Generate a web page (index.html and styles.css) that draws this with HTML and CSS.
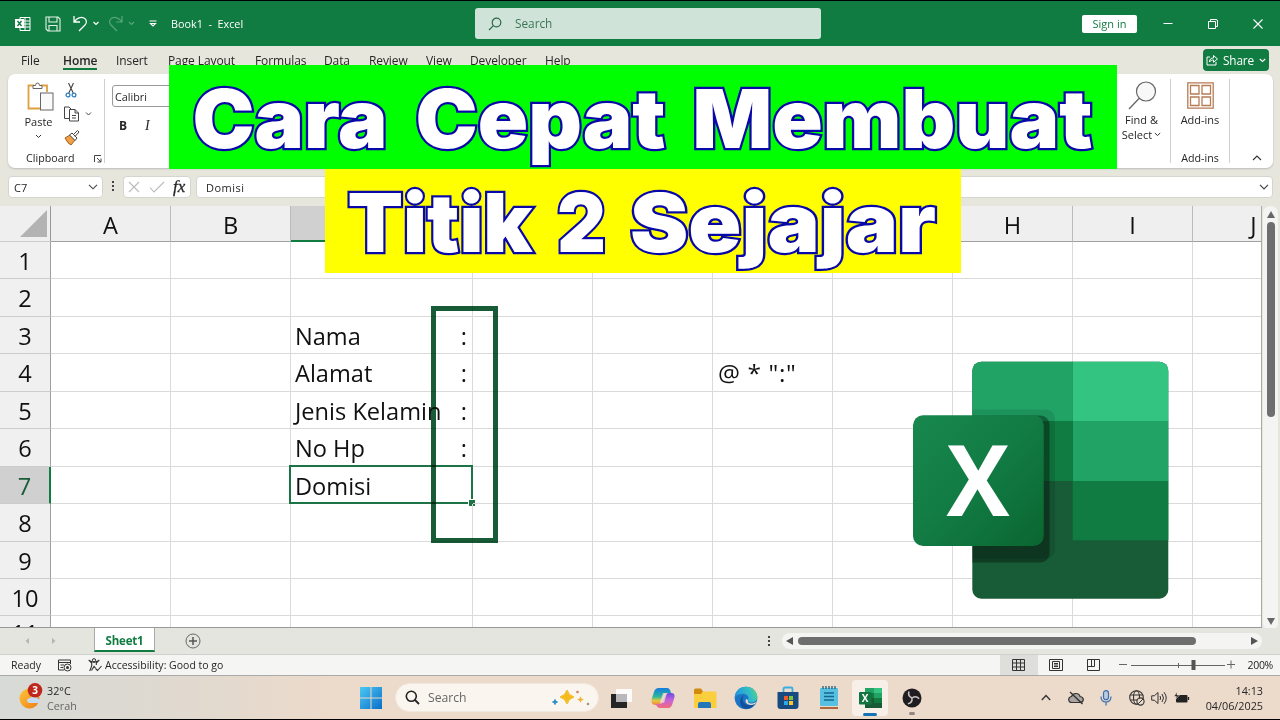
FILE: index.html
```html
<!DOCTYPE html>
<html lang="id">
<head>
    <meta charset="UTF-8">
    <title>Book1 - Excel</title>
    <link rel="stylesheet" href="styles.css">
</head>
<body>
<div class="screen">
    <!-- title bar -->
    <header class="titlebar">
        <div class="quick">
            <svg class="q-xl" width="16" height="16" viewBox="0 0 16 16"><path d="M5 1.500h10v13H5zM10 1.500v13M5 5h10M5 8h10M5 11h10" fill="none" stroke="#fff"/><rect y="3" width="9" height="9" fill="#fff"/><path d="M2.500 5l4 5M6.500 5l-4 5" stroke="#107c41" stroke-width="1.400"/></svg>
            <svg class="q-save" width="16" height="16" viewBox="0 0 16 16"><path d="M1 1h12l2 2v12H3l-2-2zM4 1v5h8V1M4 15V9.500h8V15" fill="none" stroke="#e5f2ea" stroke-width="1.100"/></svg>
            <svg class="q-undo" width="28" height="16" viewBox="0 0 28 16"><path d="M1 0v6h6M1.500 5.500C4 2 8 .5 11 2c3 1.600 3 5 1 7l-6 6" fill="none" stroke="#fff" stroke-width="1.300"/><path d="M20.500 6l2.500 2.500L25.500 6" fill="none" stroke="#fff" stroke-width="1.200"/></svg>
            <svg class="q-redo" width="28" height="16" viewBox="0 0 28 16"><g fill="none" stroke="#57a57a" stroke-width="1.200"><path d="M13 0v6H7M12.500 5.500C10 2 6 .5 3 2 0 3.600 0 7 2 9l6 6"/><path d="M20 6l2.500 2.500L25 6"/></g></svg>
            <svg class="q-more" width="8" height="8" viewBox="0 0 8 8"><path d="M.5 1h7M1.500 3.500L4 6l2.500-2.500z" fill="none" stroke="#fff" stroke-width="1.100"/></svg>
            <span>Book1&nbsp; -&nbsp; Excel</span>
        </div>
        <div class="find">
            <svg width="14" height="14" viewBox="0 0 14 14"><circle cx="8.500" cy="5.500" r="4.300" fill="none" stroke="#2a6a46" stroke-width="1.200"/><path d="M5.400 8.600L1 13" stroke="#2a6a46" stroke-width="1.200"/></svg>
            <span>Search</span>
        </div>
        <div class="win">
            <span class="signin">Sign in</span>
            <svg width="12" height="12" viewBox="0 0 12 12"><path d="M1.500 5.500h9" stroke="#fff"/></svg>
            <svg width="12" height="12" viewBox="0 0 12 12"><path d="M1.500 3.500h7v7h-7zM3.500 3.200V1.500h5.500q1.500 0 1.500 1.500v5.500H9" fill="none" stroke="#fff"/></svg>
            <svg width="12" height="12" viewBox="0 0 12 12"><path d="M1.500 1.500l9 9M10.500 1.500l-9 9" stroke="#fff" stroke-width="1.100"/></svg>
        </div>
    </header>

    <!-- ribbon tabs -->
    <nav class="tabs">
        <span class="t-file">File</span>
        <span class="t-home"><b>Home</b></span>
        <span class="t-insert">Insert</span>
        <span class="t-page">Page Layout</span>
        <span class="t-formulas">Formulas</span>
        <span class="t-data">Data</span>
        <span class="t-review">Review</span>
        <span class="t-view">View</span>
        <span class="t-dev">Developer</span>
        <span>Help</span>
        <div class="share">
            <svg width="12" height="12" viewBox="0 0 12 12"><path d="M4 3H1v8h9V8M3.500 8C3.500 5 5 4 7.500 4V1.500l4 3.500-4 3.300V6C6 6 4.500 6.500 3.500 8z" fill="none" stroke="#fff"/></svg>
            <span>Share</span>
            <svg width="7" height="5" viewBox="0 0 7 5"><path d="M.8 1l2.700 2.500L6.200 1" fill="none" stroke="#fff" stroke-width="1.200"/></svg>
        </div>
    </nav>

    <!-- ribbon -->
    <section class="ribbon">
        <div class="group clipboard">
            <div class="clip-tools">
                <div class="paste">
                    <svg width="27" height="29" viewBox="0 0 27 29"><path d="M7 3.500H1.500v23H14M14 3.500h6V10" fill="none" stroke="#e0a040" stroke-width="1.800"/><path d="M6 6.500V3.500h2.500q0-2.500 2-2.500t2 2.500H15v3z" fill="#fff" stroke="#666"/><rect x="13.500" y="11" width="12.500" height="17" fill="#fafafa" stroke="#666"/></svg>
                    <span>Paste</span>
                    <svg class="paste-arrow" width="7" height="5" viewBox="0 0 7 5"><path d="M1 1l2.500 2.500L6 1" fill="none" stroke="#333"/></svg>
                </div>
                <div class="clip-side">
                    <svg width="28" height="15" viewBox="0 0 28 15"><path d="M4.500 0l4.700 10M9.500 0L4.800 10" stroke="#444" stroke-width="1.100"/><g fill="none" stroke="#2f7fc0" stroke-width="1.300"><circle cx="4" cy="12" r="1.900"/><circle cx="10" cy="12" r="1.900"/></g></svg>
                    <svg width="28" height="16" viewBox="0 0 28 16"><path d="M5 12.500H.5V1H5l2 2M5.500 3.500H11l3.500 3.500v8h-9zM11 3.500V7h3.500M8 9.500h4M8 12h4" fill="none" stroke="#444"/><path d="M22 6.500L24.500 9 27 6.500" fill="none" stroke="#444"/></svg>
                    <svg width="28" height="15" viewBox="0 0 28 15"><path d="M1 8l5-3 5 5-4 5q-3-1-6-7z" fill="#f0a048" stroke="#a85a18"/><path d="M5.500 5L8 3l5 5-2 2.500zM9 5l4.500-4.500L15 2l-4 4.500" fill="#fff" stroke="#444"/></svg>
                </div>
            </div>
            <div class="label">Clipboard <svg width="8" height="8" viewBox="0 0 8 8"><path d="M.5 7V.5H7M3 3l4 4M7 3.500V7H3.500" fill="none" stroke="#444"/></svg></div>
        </div>
        <div class="group font">
            <div class="fontbox">Calibri</div>
            <div class="bi"><b>B</b><i>I</i></div>
        </div>
        <div class="group select">
            <svg width="29" height="29" viewBox="0 0 29 29"><circle cx="18" cy="10.500" r="9.500" fill="#f8f8f8" stroke="#666" stroke-width="1.200"/><path d="M11 17.500L1 28" stroke="#666" stroke-width="1.300"/></svg>
            <span>Find &amp;</span>
            <span>Select<svg width="7" height="5" viewBox="0 0 7 5"><path d="M.8 1l2.700 2.500L6.200 1" fill="none" stroke="#333"/></svg></span>
        </div>
        <div class="group addins">
            <svg width="27" height="27" viewBox="0 0 27 27"><path d="M.8.8h25.400v25.400H.8zM3.500 3.500h8.500v8.500H3.500zM15 3.500h8.500v8.500H15zM3.500 15h8.500v8.500H3.500zM15 15h8.500v8.500H15z" fill="none" stroke="#b77b55" stroke-width="1.300"/></svg>
            <span>Add-ins</span>
            <div class="label">Add-ins</div>
        </div>
        <svg class="collapse" width="10" height="6" viewBox="0 0 10 6"><path d="M1 5l4-4 4 4" fill="none" stroke="#333" stroke-width="1.100"/></svg>
    </section>

    <!-- formula bar -->
    <section class="formula">
        <div class="namebox"><span>C7</span><svg width="10" height="6" viewBox="0 0 10 6"><path d="M1 .8l4 4 4-4" fill="none" stroke="#444" stroke-width="1.100"/></svg></div>
        <div class="dots"><i></i><i></i><i></i></div>
        <div class="fx">
            <svg width="38" height="12" viewBox="0 0 38 12"><path d="M1 1l10 10M11 1L1 11M22 6.500l4 4.500L36 1" fill="none" stroke="#bbb" stroke-width="1.100"/></svg>
            <em>fx</em>
        </div>
        <div class="value"><span>Domisi</span><svg width="10" height="6" viewBox="0 0 10 6"><path d="M1 .8l4 4 4-4" fill="none" stroke="#444" stroke-width="1.200"/></svg></div>
    </section>

    <!-- worksheet -->
    <main class="work">
        <div class="sheet">
            <div class="row head">
                <div class="num"><svg width="28" height="29" viewBox="0 0 28 29"><path d="M27 1v27H0z" fill="#b3b3b3"/></svg></div>
                <div class="cell">A</div><div class="cell">B</div><div class="cell c sel"></div><div class="cell"></div><div class="cell"></div><div class="cell"></div><div class="cell"></div><div class="cell">H</div><div class="cell">I</div><div class="cell j">J</div>
            </div>
            <div class="row"><div class="num">1</div><div class="cell"></div><div class="cell"></div><div class="cell c"></div><div class="cell"></div><div class="cell"></div><div class="cell"></div><div class="cell"></div><div class="cell"></div><div class="cell"></div><div class="cell j"></div></div>
            <div class="row"><div class="num">2</div><div class="cell"></div><div class="cell"></div><div class="cell c"></div><div class="cell"></div><div class="cell"></div><div class="cell"></div><div class="cell"></div><div class="cell"></div><div class="cell"></div><div class="cell j"></div></div>
            <div class="row"><div class="num">3</div><div class="cell"></div><div class="cell"></div><div class="cell c"><span>Nama</span><span>:</span></div><div class="cell"></div><div class="cell"></div><div class="cell"></div><div class="cell"></div><div class="cell"></div><div class="cell"></div><div class="cell j"></div></div>
            <div class="row"><div class="num">4</div><div class="cell"></div><div class="cell"></div><div class="cell c"><span>Alamat</span><span>:</span></div><div class="cell"></div><div class="cell"></div><div class="cell code"><span>@ * ":"</span></div><div class="cell"></div><div class="cell"></div><div class="cell"></div><div class="cell j"></div></div>
            <div class="row"><div class="num">5</div><div class="cell"></div><div class="cell"></div><div class="cell c"><span>Jenis Kelamin</span><span>:</span></div><div class="cell"></div><div class="cell"></div><div class="cell"></div><div class="cell"></div><div class="cell"></div><div class="cell"></div><div class="cell j"></div></div>
            <div class="row"><div class="num">6</div><div class="cell"></div><div class="cell"></div><div class="cell c"><span>No Hp</span><span>:</span></div><div class="cell"></div><div class="cell"></div><div class="cell"></div><div class="cell"></div><div class="cell"></div><div class="cell"></div><div class="cell j"></div></div>
            <div class="row"><div class="num sel">7</div><div class="cell"></div><div class="cell"></div><div class="cell c active"><span>Domisi</span></div><div class="cell"></div><div class="cell"></div><div class="cell"></div><div class="cell"></div><div class="cell"></div><div class="cell"></div><div class="cell j"></div></div>
            <div class="row"><div class="num">8</div><div class="cell"></div><div class="cell"></div><div class="cell c"></div><div class="cell"></div><div class="cell"></div><div class="cell"></div><div class="cell"></div><div class="cell"></div><div class="cell"></div><div class="cell j"></div></div>
            <div class="row"><div class="num">9</div><div class="cell"></div><div class="cell"></div><div class="cell c"></div><div class="cell"></div><div class="cell"></div><div class="cell"></div><div class="cell"></div><div class="cell"></div><div class="cell"></div><div class="cell j"></div></div>
            <div class="row"><div class="num">10</div><div class="cell"></div><div class="cell"></div><div class="cell c"></div><div class="cell"></div><div class="cell"></div><div class="cell"></div><div class="cell"></div><div class="cell"></div><div class="cell"></div><div class="cell j"></div></div>
            <div class="row last"><div class="num">11</div><div class="cell"></div><div class="cell"></div><div class="cell c"></div><div class="cell"></div><div class="cell"></div><div class="cell"></div><div class="cell"></div><div class="cell"></div><div class="cell"></div><div class="cell j"></div></div>
        </div>
        <div class="vscroll">
            <svg width="8" height="7" viewBox="0 0 8 7"><path d="M4 0l4 7H0z" fill="#666"/></svg>
            <div class="thumb"></div>
            <svg width="8" height="7" viewBox="0 0 8 7"><path d="M4 7L0 0h8z" fill="#666"/></svg>
        </div>
    </main>

    <!-- sheet tabs -->
    <section class="sheetbar">
        <svg class="arrows" width="32" height="8" viewBox="0 0 32 8"><path d="M4 1v6L.5 4zM27 1v6l3.500-3z" fill="#b5b5b5"/></svg>
        <div class="sheettab">Sheet1</div>
        <svg class="plus" width="16" height="16" viewBox="0 0 16 16"><circle cx="8" cy="8" r="7" fill="none" stroke="#666"/><path d="M8 4v8M4 8h8" stroke="#555" stroke-width="1.500"/></svg>
        <div class="dots"><i></i><i></i><i></i></div>
        <div class="hscroll">
            <svg width="7" height="8" viewBox="0 0 7 8"><path d="M0 4l7-4v8z" fill="#555"/></svg>
            <div class="thumb"></div>
            <svg width="7" height="8" viewBox="0 0 7 8"><path d="M7 4L0 0v8z" fill="#555"/></svg>
        </div>
    </section>

    <!-- status bar -->
    <section class="status">
        <span class="ready">Ready</span>
        <svg class="macro" width="14" height="13" viewBox="0 0 14 13"><path d="M6 11H.5V1h12v4M.5 3.500h12M2.500 6H6M2.500 8.500H5" fill="none" stroke="#333"/><circle cx="9.500" cy="8.500" r="3.500" fill="#f5f5f5" stroke="#333"/><circle cx="9.500" cy="8.500" r="1.500" fill="#333"/></svg>
        <svg class="acc" width="14" height="14" viewBox="0 0 14 14"><circle cx="6" cy="2.200" r="1.600" fill="none" stroke="#333"/><path d="M.7 2l3 3v3l-2 5M11.300 2L8.300 5v2M1 2.500L6 4.500l5-2M3.500 12.500L6 8.500l1.500 1.500M7.500 10.500l2 2L13.500 8" fill="none" stroke="#333" stroke-width="1.100"/></svg>
        <span>Accessibility: Good to go</span>
        <div class="views">
            <div class="view on"><svg width="13" height="12" viewBox="0 0 13 12"><path d="M.5.500h12v11H.500zM4.500.500v11M8.500.500v11M.500 4h12M.500 8h12" fill="none" stroke="#333"/></svg></div>
            <div class="view"><svg width="14" height="12" viewBox="0 0 14 12"><path d="M.500.500h13v11H.500zM3.500 2.500h7v7h-7zM5 4.500h4M5 6h4M5 7.500h4" fill="none" stroke="#333"/></svg></div>
            <div class="view"><svg width="13" height="12" viewBox="0 0 13 12"><path d="M.500.500h12v11H.500zM.500 7.500h7V.500M4.500.500v7" fill="none" stroke="#333"/></svg></div>
            <svg class="zoom" width="116" height="12" viewBox="0 0 116 12"><path d="M0 5.500h8M12 6.500h94M59.500 4v5M108 5.500h8M112 1.500v8" stroke="#666"/><rect x="72.500" y="1" width="4" height="10" fill="#555"/></svg>
            <span class="pct">200%</span>
        </div>
    </section>

    <!-- taskbar -->
    <footer class="taskbar">
        <div class="weather">
            <svg width="26" height="28" viewBox="0 0 26 28"><defs><linearGradient id="sun" x1="0" y1="0" x2="1" y2="1"><stop offset="0" stop-color="#ffc83a"/><stop offset="1" stop-color="#ee7c16"/></linearGradient></defs><circle cx="10.500" cy="15.500" r="10" fill="url(#sun)"/><path d="M11 20q-3-.3-3-2.500 0-2.500 3.500-2.500 1-2.500 4-2 2.500 0 3 2.500 3 .5 2.500 3-.5 1.500-3 1.500z" fill="#c5dbf5"/><circle cx="16" cy="7.300" r="7.300" fill="#c0271c"/><text x="16" y="11" text-anchor="middle" class="badge">3</text></svg>
            <div><span>32°C</span><span class="sky">Cerah</span></div>
        </div>
        <svg class="start" width="22" height="22" viewBox="0 0 22 22"><defs><linearGradient id="win" x1="0" y1="0" x2="1" y2="1"><stop offset="0" stop-color="#4cc8f4"/><stop offset="1" stop-color="#0a6fc8"/></linearGradient></defs><path d="M0 0h10.500v10.500H0zM11.500 0H22v10.500H11.500zM0 11.500h10.500V22H0zM11.500 11.500H22V22H11.500z" fill="url(#win)"/></svg>
        <div class="tasksearch">
            <svg width="15" height="15" viewBox="0 0 15 15"><circle cx="6.300" cy="6.300" r="5" fill="none" stroke="#222" stroke-width="1.600"/><path d="M10 10l4 4" stroke="#222" stroke-width="1.800"/></svg>
            <span>Search</span>
            <svg class="spark" width="38" height="18" viewBox="0 0 38 18"><path d="M15 1q1.500 5.500 7 7-5.500 1.500-7 7-1.500-5.500-7-7 5.500-1.500 7-7z" fill="#f4bb1c" stroke="#f4bb1c"/><path d="M28.500 7q.5 3 3.500 3.500-3 .5-3.500 3.500-.5-3-3.500-3.500 3-.5 3.500-3.500z" fill="#f0b53a"/><path d="M.5 13h5M3 10.500v5" stroke="#3292c8" stroke-width="2"/><circle cx="25.500" cy="3" r="1.300" fill="#cc8063"/><circle cx="36" cy="15" r="1.300" fill="#9b9a75"/></svg>
        </div>
        <svg class="app" width="24" height="24" viewBox="0 0 24 24"><path d="M1 8h16v14H1z" fill="#252525"/><path d="M6 3h16v13H6z" fill="#fff" opacity=".88"/><path d="M6 8h11v8H6z" fill="#b8b8bc"/></svg>
        <svg class="app" width="24" height="24" viewBox="0 0 24 24"><defs><linearGradient id="co1" x1="0" y1="0" x2="0" y2="1"><stop offset="0" stop-color="#147ce0"/><stop offset=".5" stop-color="#28b69d"/><stop offset=".75" stop-color="#e8c83c"/><stop offset="1" stop-color="#f17b4c"/></linearGradient><linearGradient id="co2" x1="0" y1="0" x2="0" y2="1"><stop offset="0" stop-color="#694ce0"/><stop offset=".5" stop-color="#c862d8"/><stop offset="1" stop-color="#f26b78"/></linearGradient></defs><path d="M8 2h8q3 0 4 5h-5q-2 0-3 3l-2 6q-1 3-3 3H4q-5-1-3-7l2-6q1-4 5-4z" fill="url(#co1)"/><path d="M16 22H9q-3 0-4-4h4q2 0 3-3l2-5q1-3 4-3h2q5 0 3 6l-2 6q-1 3-3 3z" fill="url(#co2)"/><path d="M9 16l3-9h4l-3 10z" fill="#ecdacb" opacity=".8"/></svg>
        <svg class="app" width="24" height="24" viewBox="0 0 24 24"><path d="M1 4q0-1.500 1.500-1.500H8l2 3-2 4H1z" fill="#d18a0e"/><path d="M1 8h7l2-2.500h12.500q1 0 1 1V21q0 1-1 1H2q-1 0-1-1z" fill="#fbce3e"/><path d="M5 22v-4q0-2 2-2h9q2 0 2 2v4z" fill="#2276ba"/></svg>
        <svg class="app" width="24" height="24" viewBox="0 0 24 24"><defs><linearGradient id="edge" x1="0" y1=".3" x2="1" y2="0"><stop offset="0" stop-color="#2196dc"/><stop offset=".6" stop-color="#32bec6"/><stop offset="1" stop-color="#62d868"/></linearGradient></defs><circle cx="12" cy="12" r="11.300" fill="#1b75c5"/><path d="M.8 11.500C1 5 6 .7 12 .7c6.500 0 11.300 5 11.300 10 0 4-3 5.800-6.300 5.800-3 0-4-1-3-2.500C16 10.500 12 7 7.500 8 4 8.500 2 9.500.8 11.500z" fill="url(#edge)"/><path d="M10 9c-3 4-1 9 4 10 3 .5 5-.5 7-2-3 6-8.500 6.500-12 5C5 19 5 12 10 9z" fill="#124f9d"/><path d="M14 14c-1 2 1 4 4 3.500 2-.2 3.500-1 4.500-2l-1.500 2.500c-5 2.500-11 0-9-5z" fill="#ecdacb"/></svg>
        <svg class="app" width="24" height="24" viewBox="0 0 24 24"><path d="M7.500 7V3q0-1.500 1.500-1.500h6q1.500 0 1.500 1.500v4" fill="none" stroke="#38aee2" stroke-width="1.800"/><path d="M1.500 6h21v14q0 3-3 3h-15q-3 0-3-3z" fill="#174a7f"/><path d="M8 10h4v4H8z" fill="#ef5a2a"/><path d="M13 10h4v4h-4z" fill="#80c43d"/><path d="M8 15h4v4H8z" fill="#2aa9e8"/><path d="M13 15h4v4h-4z" fill="#ffc52e"/></svg>
        <svg class="app" width="24" height="24" viewBox="0 0 24 24"><rect x="3" y="2" width="18" height="18" rx="1" fill="#56c0e2"/><path d="M6 0v3M9 0v3M12 0v3M15 0v3M18 0v3" stroke="#265c72" stroke-width="1.300"/><path d="M7 7h10M7 10.500h10M7 14h10" stroke="#17658c" stroke-width="1.300"/><path d="M3 22h18" stroke="#9b4b1c" stroke-width="1.600"/></svg>
        <div class="app excel">
            <svg width="24" height="22" viewBox="0 0 24 22"><path d="M6 1h17v20H6z" fill="#185c37"/><path d="M6 1h9v5H6z" fill="#21a366"/><path d="M15 1h8v5h-8z" fill="#33c481"/><path d="M15 6h8v5h-8z" fill="#21a366"/><path d="M6 6h9v5H6zM15 11h8v5h-8z" fill="#107c41"/><rect x="0" y="5" width="12.500" height="12.500" rx="1" fill="#10753e"/><text x="6.200" y="15" text-anchor="middle" class="badge">X</text></svg>
            <i></i>
        </div>
        <div class="app obs">
            <svg width="20" height="20" viewBox="0 0 20 20"><circle cx="10" cy="10" r="9.500" fill="#1f1d20"/><g fill="none" stroke="#c8c3c5" stroke-width="1.500"><path d="M10 10Q5.500 8 7 3.500"/><path d="M10 10Q5.500 8 7 3.500" transform="rotate(120 10 10)"/><path d="M10 10Q5.500 8 7 3.500" transform="rotate(240 10 10)"/></g></svg>
            <i></i>
        </div>
        <div class="tray">
            <svg width="10" height="7" viewBox="0 0 10 7"><path d="M.800 6L5 1.500 9.200 6" fill="none" stroke="#333" stroke-width="1.300"/></svg>
            <svg class="cloud" width="16" height="14" viewBox="0 0 16 14"><path d="M4 11.500Q.700 11.500.700 8.500.700 6 3.500 5.500 4.500 2.500 8 2.500T12 5.500q3.300.500 3.300 3t-3 3z" fill="#aaa5a0" stroke="#333" stroke-width="1.200"/><path d="M2 1l12.500 12" stroke="#333" stroke-width="1.400"/></svg>
            <svg class="mic" width="12" height="16" viewBox="0 0 12 16"><rect x="3.500" y=".7" width="5" height="9" rx="2.500" fill="#b9cbe0" stroke="#3a6fb0" stroke-width="1.200"/><path d="M1 6.500Q1 12 6 12t5-5.500M6 12v3.500" fill="none" stroke="#3a6fb0" stroke-width="1.200"/></svg>
            <svg class="globe" width="16" height="16" viewBox="0 0 16 16"><g fill="none" stroke="#333" stroke-width="1.100"><circle cx="7.500" cy="7.500" r="6.800"/><ellipse cx="7.500" cy="7.500" rx="3" ry="6.800"/><path d="M1.500 5h12M1.500 10H9"/></g><circle cx="11.500" cy="11.500" r="3.600" fill="#ecdacb" stroke="#333" stroke-width="1.100"/><path d="M9.200 13.800l4.600-4.600" stroke="#333"/></svg>
            <svg class="vol" width="16" height="14" viewBox="0 0 16 14"><path d="M.700 4.800h2.600L7 1.500v11L3.300 9.200H.700zM9 5q1.300 2 0 4M11 3q3 4 0 8M13 1.200q4.500 5.800 0 11.600" fill="none" stroke="#333" stroke-width="1"/></svg>
            <svg class="bat" width="16" height="12" viewBox="0 0 16 12"><rect x="2" y="3" width="11.500" height="7.500" rx="1" fill="#222"/><path d="M14.500 5v3" stroke="#222" stroke-width="1.300"/><path d="M3 0L0 4.500h2.500L1.500 7.500 5.500 3H3z" fill="#222" stroke="#ecdacb" stroke-width=".6"/></svg>
            <div class="clock"><span>14:13</span><span>04/06/2025</span></div>
        </div>
    </footer>

    <!-- things lying over the window -->
    <div class="frame"></div>
    <svg class="logo" width="257" height="239" viewBox="0 0 257 239">
        <defs>
            <clipPath id="book"><rect x="60.300" y=".700" width="196" height="237" rx="9"/></clipPath>
            <linearGradient id="front" x1="0" y1="0" x2="1" y2="1"><stop offset="0" stop-color="#18884f"/><stop offset=".5" stop-color="#117b43"/><stop offset="1" stop-color="#0b6631"/></linearGradient>
        </defs>
        <g clip-path="url(#book)">
            <path d="M60 0h197v239H60z" fill="#185c37"/>
            <path d="M60 0h100.700v60H60zM160.700 60H257v60h-96.300z" fill="#21a366"/>
            <path d="M160.700 0H257v60h-96.300z" fill="#33c481"/>
            <path d="M60 60h100.700v60H60zM160.700 120H257v59.300h-96.300z" fill="#107c41"/>
            <rect x="20" y="48.500" width="123" height="149" rx="9" opacity=".1"/>
            <rect x="20" y="54.500" width="117.500" height="147" rx="9" opacity=".35"/>
        </g>
        <rect x="1" y="54.300" width="130.700" height="130.700" rx="10" fill="url(#front)"/>
        <text x="34.500" y="154.800" textLength="63" lengthAdjust="spacingAndGlyphs" class="bigx">X</text>
    </svg>
    <svg class="banner green" width="948" height="104" viewBox="0 0 948 104">
        <text x="23.500" y="82.500" textLength="195" lengthAdjust="spacingAndGlyphs">Cara</text>
        <text x="246.500" y="82.500" textLength="250" lengthAdjust="spacingAndGlyphs">Cepat</text>
        <text x="523.500" y="82.500" textLength="400" lengthAdjust="spacingAndGlyphs">Membuat</text>
    </svg>
    <svg class="banner yellow" width="636" height="104" viewBox="0 0 636 104">
        <text x="22.500" y="82.500" textLength="185" lengthAdjust="spacingAndGlyphs">Titik</text>
        <text x="232" y="82.500" textLength="49" lengthAdjust="spacingAndGlyphs">2</text>
        <text x="305" y="82.500" textLength="306" lengthAdjust="spacingAndGlyphs">Sejajar</text>
    </svg>
</div>
</body>
</html>
```
FILE: styles.css
```css
* {
    box-sizing: border-box;
}
body {
    margin: 0;
    font: 11px/15px "Open Sans", "Noto Sans", sans-serif;
    color: #262626;
}
svg {
    display: block;
    flex: none;
}
.screen {
    position: relative;
    display: flex;
    flex-direction: column;
    width: 1280px;
    height: 720px;
    overflow: hidden;
    background: #e6e6dd;
    border-top: 1px solid #000;
    border-bottom: 1px solid #000;
}

/* title bar */
.titlebar {
    display: flex;
    align-items: center;
    height: 45px;
    background: #107c41;
    color: #fff;
}
.quick {
    display: flex;
    align-items: center;
    width: 475px;
    padding-left: 15px;
    font-size: 10.800px;
}
.q-save {
    margin-left: 14px;
}
.q-undo {
    margin-left: 12px;
}
.q-redo {
    margin-left: 8px;
}
.q-more {
    margin: 0 14px 0 12px;
}
.find {
    display: flex;
    align-items: center;
    gap: 13px;
    width: 346px;
    height: 31px;
    padding-left: 13px;
    border-radius: 3px;
    background: #cfe3d8;
    color: #3b7554;
    font-size: 11.800px;
}
.win {
    display: flex;
    align-items: center;
    gap: 33px;
    margin-left: auto;
    padding-right: 16px;
}
.signin {
    width: 55px;
    margin-right: -8px;
    border-radius: 2px;
    background: #fff;
    color: #107c41;
    line-height: 18px;
    text-align: center;
}

/* tabs */
.tabs {
    display: flex;
    height: 28px;
    padding: 7px 11px 0 21px;
    font-size: 12px;
    letter-spacing: -.1px;
}
.t-file { width: 42px; }
.t-home { width: 53px; }
.t-insert { width: 52px; }
.t-page { width: 87px; }
.t-formulas { width: 69px; }
.t-data { width: 45px; }
.t-review { width: 57px; }
.t-view { width: 44px; }
.t-dev { width: 75px; }
.tabs b {
    display: inline-block;
    height: 17px;
    border-bottom: 2px solid #107c41;
    font-weight: 600;
}
.share {
    display: flex;
    align-items: center;
    justify-content: center;
    gap: 5px;
    width: 66px;
    height: 22px;
    margin: -4px 0 0 auto;
    border-radius: 4px;
    background: #107c41;
    color: #fff;
    font-size: 11.800px;
}

/* ribbon */
.ribbon {
    display: flex;
    height: 94px;
    margin: 0 7px 0 8px;
    padding-top: 5px;
    border-radius: 7px;
    background: #fff;
    box-shadow: 0 1px 2px #bbb;
    font-size: 11px;
}
.group {
    height: 84px;
    border-right: 1px solid #d0d0d0;
}
.clipboard {
    width: 97px;
}
.clip-tools {
    display: flex;
    height: 70px;
}
.paste {
    display: flex;
    flex-direction: column;
    align-items: center;
    width: 60px;
    padding: 3px 0 0 4px;
}
.paste span {
    margin-top: 3px;
    margin-right: 3px;
}
.paste-arrow {
    margin: 5px 3px 0 0;
}
.clip-side {
    display: flex;
    flex-direction: column;
    gap: 8px;
    padding-top: 4px;
    margin-left: -4px;
}
.label {
    display: flex;
    align-items: center;
    font-size: 10.700px;
}
.clipboard .label {
    gap: 20px;
    padding-left: 18px;
    margin-top: 2px;
    white-space: nowrap;
}
.font {
    width: 1009px;
    padding: 6px 0 0 7px;
}
.fontbox {
    height: 22px;
    width: 120px;
    padding: 3px 2px;
    border: 1px solid #999;
    border-radius: 3px;
    font-size: 10.800px;
}
.bi {
    display: flex;
    gap: 18px;
    padding: 11px 7px;
    font-size: 12px;
}
.bi i {
    font-family: "Liberation Serif", serif;
    font-size: 14px;
}
.select {
    display: flex;
    flex-direction: column;
    align-items: center;
    width: 57px;
    padding: 2px 1px 0 0;
}
.select svg:first-child {
    margin: 0 0 2px 2px;
}
.select span svg {
    display: inline;
}
.select span svg:first-child {
    margin: 0 0 2px 2px;
}
.addins {
    display: flex;
    flex-direction: column;
    align-items: center;
    width: 59px;
    padding-top: 3px;
}
.addins span {
    margin-top: 3px;
}
.addins .label {
    margin-top: 24px;
}
.collapse {
    margin: 76px 0 0 22px;
}

/* formula bar */
.formula {
    display: flex;
    height: 38px;
    padding: 8px 7px 8px 8px;
}
.namebox, .fx, .value {
    display: flex;
    align-items: center;
    border: 1px solid #d5d5d0;
    border-radius: 4px;
    background: #fff;
}
.namebox {
    justify-content: space-between;
    width: 95px;
    padding: 0 4px 0 5px;
}
.formula .dots {
    margin: 5px 8px 0 9px;
}
.dots {
    display: flex;
    flex-direction: column;
    gap: 2px;
    width: 3px;
}
.dots i {
    width: 2px;
    height: 2px;
    background: #444;
}
.fx {
    width: 68px;
    gap: 7px;
    padding-left: 4px;
}
.fx em {
    font: italic 17px/18px "Liberation Serif", serif;
    -webkit-text-stroke: .3px #262626;
}
.value {
    flex: 1;
    justify-content: space-between;
    margin-left: 5px;
    padding: 0 3px 0 9px;
    letter-spacing: .5px;
}

/* worksheet */
.work {
    display: flex;
    height: 422px;
}
.sheet {
    width: 1262px;
    overflow: hidden;
    background: #fff;
    border-right: 1px solid #aaa;
    border-bottom: 1px solid #999;
}
.row {
    display: flex;
    height: 37.450px;
    font-size: 23.600px;
    line-height: 38px;
    color: #111;
}
.num {
    flex: none;
    width: 51px;
    background: #f0f0f0;
    border-right: 1px solid #a0a0a0;
    border-bottom: 1px solid #ccc;
    text-align: center;
}
.cell {
    position: relative;
    flex: none;
    width: 120px;
    border-right: 1px solid #dadada;
    border-bottom: 1px solid #dadada;
    padding-left: 5px;
    white-space: nowrap;
}
.cell.c {
    display: flex;
    justify-content: space-between;
    width: 182px;
    padding: 0 5px 0 4px;
}
.cell.code {
    font-size: 24.500px;
    line-height: 37px;
    letter-spacing: .6px;
}
.cell.j {
    width: 91px;
    border-right: 0;
}
.last {
    line-height: 34px;
}
.head {
    height: 36px;
}
.head .num {
    background: #efefef;
    border-right-color: #999;
    padding: 3px 0 0 20px;
}
.head .cell {
    padding: 0;
    background: #efefef;
    border-right-color: #bbb;
    border-bottom-color: #a0a0a0;
    text-align: center;
}
.head .cell.j {
    padding-left: 30px;
}
.head .cell.sel {
    background: #d0d0d0;
    border-bottom: 2px solid #107c41;
}
.num.sel {
    background: #d0d0d0;
    border-right: 2px solid #107c41;
    color: #185c37;
}
/* selection border with the fill handle */
.active::before {
    content: "";
    position: absolute;
    inset: -2px -1px -1px -2px;
    border: 2px solid #1c7346;
}
.active::after {
    content: "";
    position: absolute;
    right: -3px;
    bottom: -3px;
    width: 6px;
    height: 6px;
    background: #1c7346;
    border: 1px solid #fff;
    border-width: 1px 0 0 1px;
}
.vscroll {
    display: flex;
    flex-direction: column;
    align-items: center;
    width: 15px;
    margin-left: 1px;
    height: 424px;
    padding: 5px 0;
    border-radius: 7px;
    background: #f4f4f2;
}
.thumb {
    border-radius: 5px;
    background: #6e6e6e;
}
.vscroll .thumb {
    width: 8px;
    height: 197px;
    margin: 4px 0 201px;
}

/* sheet tabs */
.sheetbar {
    display: flex;
    align-items: center;
    height: 26px;
    background: #e5e5e0;
}
.arrows {
    margin-left: 25px;
}
.sheettab {
    align-self: flex-start;
    width: 61px;
    height: 24px;
    margin-left: 37px;
    border: 1px solid #aaa;
    border-top: 0;
    border-bottom: 2px solid #107c41;
    background: #fff;
    color: #107c41;
    font: bold 11.500px/26px "Open Sans", sans-serif;
    letter-spacing: -.2px;
    text-align: center;
}
.plus {
    margin-left: 30px;
}
.sheetbar .dots {
    margin-left: 567px;
}
.hscroll {
    display: flex;
    align-items: center;
    width: 480px;
    height: 16px;
    margin-left: 11px;
    padding: 0 4px;
    border-radius: 8px;
    background: #f4f4f2;
}
.hscroll .thumb {
    width: 399px;
    height: 8px;
    margin: 0 55px 0 5px;
}

/* status bar */
.status {
    display: flex;
    align-items: center;
    height: 22px;
    border-top: 1px solid #d0d0cc;
    border-bottom: 1px solid #aaa;
    background: #f5f5f4;
    font-size: 10.500px;
}
.ready {
    width: 47px;
    padding-left: 11px;
}
.macro {
    margin-left: 11px;
}
.acc {
    margin: 0 3px 0 16px;
}
.views {
    display: flex;
    align-items: center;
    margin-left: auto;
    padding-right: 7px;
}
.view {
    display: flex;
    align-items: center;
    justify-content: center;
    width: 37.500px;
    height: 20px;
}
.view.on {
    background: #dededb;
}
.zoom {
    margin: 0 13px 0 6px;
}
.pct {
    letter-spacing: -.3px;
}

/* taskbar */
.taskbar {
    display: flex;
    align-items: center;
    flex: 1;
    background: linear-gradient(90deg, #d7dad6 0, #dfd9d0 170px, #ecdaca 330px, #ecdacb 100%);
}
.weather {
    display: flex;
    gap: 2px;
    width: 341px;
    padding-left: 19px;
    font-size: 10.800px;
}
.weather span, .clock span {
    display: block;
}
.sky {
    color: #666;
}
.badge {
    fill: #fff;
    font: bold 10px "Open Sans", sans-serif;
}
.start {
    margin-left: 19px;
}
.tasksearch {
    display: flex;
    align-items: center;
    width: 204px;
    height: 29px;
    margin: 0 11px 0 13px;
    padding: 0 8px 0 9px;
    border: 1px solid #f0e7df;
    border-radius: 15px;
    background: #faf5ef;
    color: #666;
    font-size: 12.200px;
}
.tasksearch span {
    margin-left: 8px;
}
.spark {
    margin-left: auto;
}
.app {
    flex: none;
    margin-right: 17.400px;
}
.excel, .obs {
    position: relative;
}
.excel {
    width: 36px;
    height: 36px;
    margin: 0 14px 0 -6px;
    padding: 7px;
    border-radius: 4px;
    background: #f7efe8;
}
.excel i, .obs i {
    position: absolute;
    left: 11px;
    bottom: 0;
    width: 14px;
    height: 3px;
    border-radius: 2px;
    background: #1673b4;
}
.obs i {
    left: 7px;
    bottom: -7px;
    width: 6px;
    background: #91877e;
}
.tray {
    display: flex;
    align-items: center;
    margin-left: auto;
    padding-right: 17px;
}
.cloud {
    margin-left: 17px;
}
.mic {
    margin-left: 16px;
}
.globe {
    margin-left: 17px;
}
.vol {
    margin-left: 6px;
}
.bat {
    margin-left: 7px;
}
.clock {
    width: 73px;
    text-align: right;
    font-size: 10.800px;
}

/* overlays */
.frame {
    position: absolute;
    left: 431px;
    top: 305px;
    width: 67px;
    height: 237px;
    border: 5px solid #185c37;
    mix-blend-mode: multiply;
}
.logo {
    position: absolute;
    left: 912px;
    top: 360px;
}
.bigx {
    fill: #fff;
    font: bold 99px "Open Sans", sans-serif;
}
.banner {
    position: absolute;
}
.green {
    left: 169px;
    top: 64px;
    background: #0f0;
}
.yellow {
    left: 325px;
    top: 168px;
    background: #ff0;
}
.banner text {
    font: 900 81px Inter, "Open Sans", sans-serif;
    fill: #fff;
    stroke: #0808a8;
    stroke-width: 4.500px;
    paint-order: stroke;
}
```
